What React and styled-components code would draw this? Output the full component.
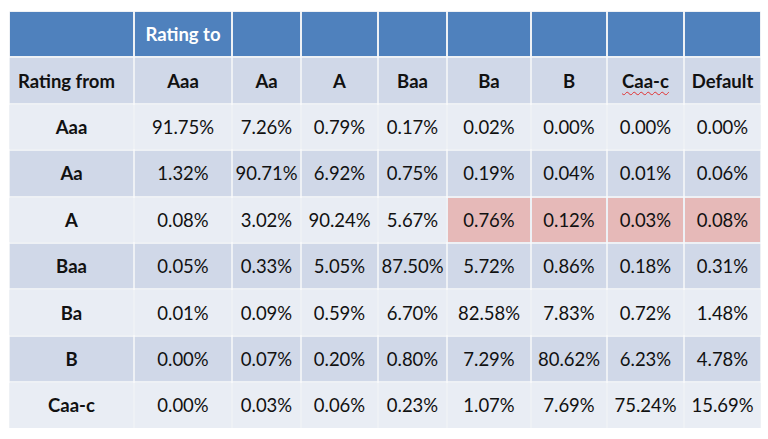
import React from 'react';
import styled, { createGlobalStyle } from 'styled-components';

const GlobalStyle = createGlobalStyle`
  html, body {
    margin: 0;
    padding: 0;
    background: #ffffff;
  }
  body {
    font-family: Lato, "Liberation Sans", sans-serif;
  }
`;

const Page = styled.div`
  padding: 12px 8px 0 10px;
`;

const Grid = styled.div`
  display: grid;
  grid-template-columns: 123px 96px 67px 75px 67px 82px 74px 75px 75px;
  grid-auto-rows: 44.4px;
  gap: 2px;
  width: 750px;
  background: #ffffff;
`;

const bgFor = tone =>
  ({
    blue: '#4f81bd',
    dark: '#d0d8e8',
    light: '#e9edf4',
    pink: '#e6b9b8',
  }[tone]);

const Cell = styled.div`
  display: flex;
  align-items: center;
  justify-content: ${({ $left }) => ($left ? 'flex-start' : 'center')};
  padding: ${({ $left }) => ($left ? '0 0 0 8px' : '0')};
  background: ${({ $tone }) => bgFor($tone)};
  color: ${({ $tone }) => ($tone === 'blue' ? '#ffffff' : '#111111')};
  font-size: 18.5px;
  font-weight: ${({ $bold }) => ($bold ? 700 : 400)};
  white-space: nowrap;
  box-shadow: 0 0 0 0.5px rgba(190, 200, 215, 0.5);
`;

const Squiggle = styled.span`
  text-decoration: underline wavy #e03030;
  text-decoration-thickness: 1px;
  text-underline-offset: 3px;
`;

const columns = ['Aaa', 'Aa', 'A', 'Baa', 'Ba', 'B', 'Caa-c', 'Default'];

const rows = [
  ['Aaa', ['91.75%', '7.26%', '0.79%', '0.17%', '0.02%', '0.00%', '0.00%', '0.00%']],
  ['Aa', ['1.32%', '90.71%', '6.92%', '0.75%', '0.19%', '0.04%', '0.01%', '0.06%']],
  ['A', ['0.08%', '3.02%', '90.24%', '5.67%', '0.76%', '0.12%', '0.03%', '0.08%']],
  ['Baa', ['0.05%', '0.33%', '5.05%', '87.50%', '5.72%', '0.86%', '0.18%', '0.31%']],
  ['Ba', ['0.01%', '0.09%', '0.59%', '6.70%', '82.58%', '7.83%', '0.72%', '1.48%']],
  ['B', ['0.00%', '0.07%', '0.20%', '0.80%', '7.29%', '80.62%', '6.23%', '4.78%']],
  ['Caa-c', ['0.00%', '0.03%', '0.06%', '0.23%', '1.07%', '7.69%', '75.24%', '15.69%']],
];

// row "A" has the last four cells highlighted
const isHighlighted = (from, col) => from === 'A' && col >= 4;

const App = () => (
  <Page>
    <GlobalStyle />
    <Grid>
      <Cell $tone="blue" />
      <Cell $tone="blue" $bold>Rating to</Cell>
      {columns.slice(1).map(c => (
        <Cell key={c} $tone="blue" />
      ))}

      <Cell $tone="dark" $bold $left>Rating from</Cell>
      {columns.map(c => (
        <Cell key={c} $tone="dark" $bold>
          {c === 'Caa-c' ? <Squiggle>{c}</Squiggle> : c}
        </Cell>
      ))}

      {rows.map(([from, values], i) => {
        const tone = i % 2 === 0 ? 'light' : 'dark';
        return (
          <React.Fragment key={from}>
            <Cell $tone={tone} $bold>{from}</Cell>
            {values.map((v, j) => (
              <Cell key={j} $tone={isHighlighted(from, j) ? 'pink' : tone}>
                {v}
              </Cell>
            ))}
          </React.Fragment>
        );
      })}
    </Grid>
  </Page>
);

export default App;
